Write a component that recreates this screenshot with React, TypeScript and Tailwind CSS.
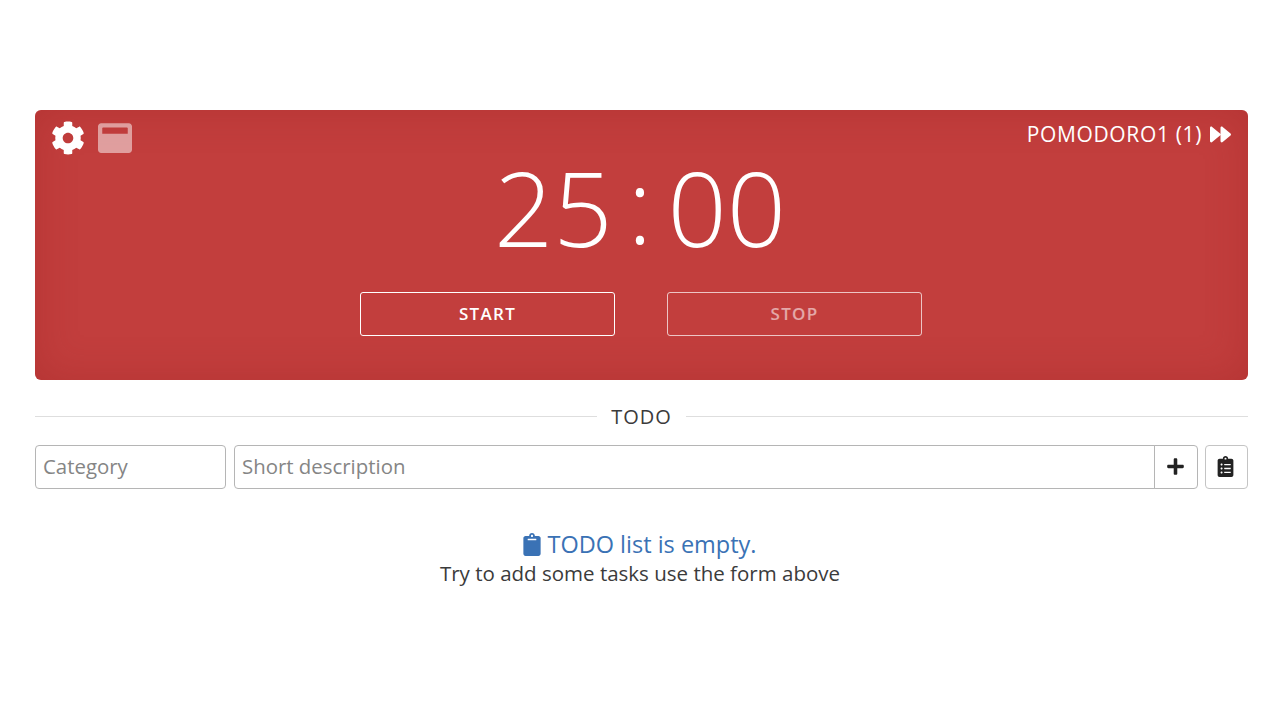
import { FaCog, FaWindowMaximize, FaForward, FaPlus, FaClipboardList, FaClipboard } from "react-icons/fa";

export default function App() {
  return (
    <div className="min-h-[720px] bg-white pl-[35px] pr-[32px] pt-[110px] pb-10 font-['Open_Sans',sans-serif] text-[#3b3b3b]">
      {/* Timer card */}
      <div className="h-[270px] rounded-md bg-[#c23e3d] shadow-[inset_0_0_40px_rgba(150,30,30,0.3)] text-white px-4 pt-3">
        <div className="flex items-start justify-between">
          <div className="flex items-center gap-[13px] -mt-[1px]">
            <FaCog className="w-[34px] h-[34px]" />
            <FaWindowMaximize className="w-[34px] h-[34px] opacity-50" />
          </div>
          <div className="flex items-center gap-2 mr-px text-[21px] leading-[24px] tracking-[0.65px]">
            <span>POMODORO1 (1)</span>
            <FaForward className="w-[21px] h-[21px]" />
          </div>
        </div>

        <div className="flex items-center justify-center h-[102px] mt-[1px] pr-[3px] text-[104px] leading-none font-[340]">
          <span>25</span>
          <span className="mx-[15px] -mt-[6px]">:</span>
          <span>00</span>
        </div>

        <div className="flex justify-center gap-[52px] mt-[34px] pr-[1px]">
          <button className="w-[255px] h-[44px] rounded-[3px] border border-white text-[17px] font-semibold tracking-[1.3px]">
            START
          </button>
          <button className="w-[255px] h-[44px] rounded-[3px] border border-white/70 text-[17px] font-semibold tracking-[1.3px] text-white/55">
            STOP
          </button>
        </div>
      </div>

      {/* Divider */}
      <div className="flex items-center gap-[14px] mt-[23px] h-[26px]">
        <div className="flex-1 h-px bg-[#dedede]" />
        <span className="pt-[2px] text-[20px] leading-[26px] tracking-[1px]">TODO</span>
        <div className="flex-1 h-px bg-[#dedede]" />
      </div>

      {/* Form */}
      <div className="flex gap-2 mt-[16px]">
        <input
          placeholder="Category"
          className="w-[191px] h-[44px] rounded-[4px] border border-[#b5b5b5] pl-[7px] pr-2 pb-[2px] text-[20.4px] placeholder:text-[#858585] outline-none"
        />
        <div className="flex flex-1">
          <input
            placeholder="Short description"
            className="flex-1 h-[44px] rounded-l-[4px] border border-[#b5b5b5] pl-[7px] pr-2 pb-[2px] text-[20.4px] placeholder:text-[#858585] outline-none"
          />
          <button className="w-[44px] h-[44px] -ml-px flex items-center justify-center pr-[2px] pb-[2px] rounded-r-[4px] border border-[#b5b5b5] text-[#222]">
            <FaPlus className="w-[19px] h-[19px]" />
          </button>
        </div>
        <button className="w-[43px] h-[44px] -ml-px flex items-center justify-center pr-[2px] pb-[2px] rounded-[4px] border border-[#c4c4c4] text-[#222]">
          <FaClipboardList className="w-[17px] h-[21px]" />
        </button>
      </div>

      {/* Empty state */}
      <div className="mt-[39px] pr-[3px] text-center">
        <div className="flex items-center justify-center gap-[6px] text-[23.5px] leading-[32px] text-[#3a72b5]">
          <FaClipboard className="w-[18px] h-[23px]" />
          <span>TODO list is empty.</span>
        </div>
        <p className="text-[20.5px] leading-[26px]">Try to add some tasks use the form above</p>
      </div>
    </div>
  );
}
